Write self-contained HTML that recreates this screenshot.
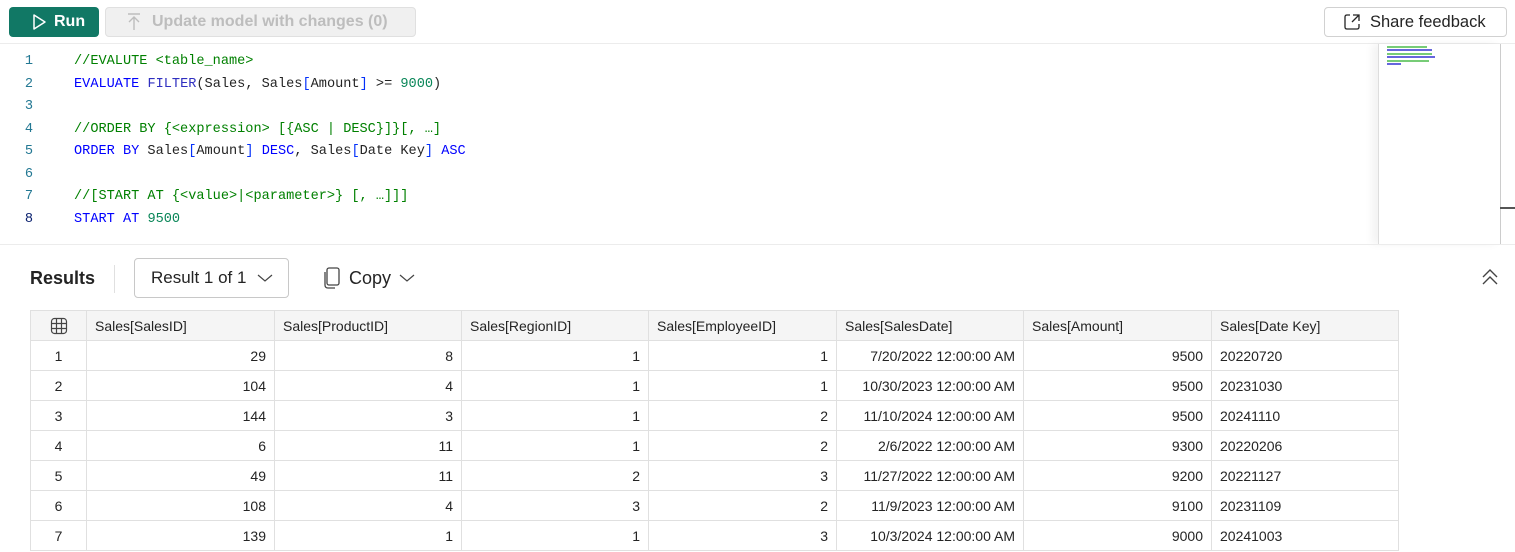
<!DOCTYPE html>
<html><head><style>
body{margin:0;width:1515px;height:552px;overflow:hidden;background:#fff;font-family:"Segoe UI","Liberation Sans",sans-serif;color:#242424;position:relative}
.abs{position:absolute}
.btn{position:absolute;border-radius:4px;font-size:16px;box-sizing:border-box;display:flex;align-items:center}
.code{position:absolute;left:0;top:46px;width:1378px;height:198px;font-family:"Liberation Mono",monospace;font-size:13.6px}
.ln{position:absolute;left:22px;width:14px;color:#237893;text-align:center}
.cl{position:absolute;left:74px;white-space:pre}
.c{color:#008000}.k{color:#0000ff}.n{color:#098658}.f{color:#3030c0}.b{color:#0431fa}
table{position:absolute;left:30px;top:310px;border-collapse:collapse;font-size:14px}
td,th{border:1px solid #e0e0e0;height:30px;padding:0 8px;font-weight:normal;text-align:right;box-sizing:border-box}
th{background:#f5f5f5;text-align:left}
td:first-child{text-align:center;background:#fff}
td:last-child{text-align:left}
</style></head><body>
<div class="btn" style="left:9px;top:7px;width:90px;height:30px;background:#117865;color:#fff;font-weight:600;padding-left:20px">
<svg width="20" height="20" viewBox="0 0 20 20" style="position:absolute;left:20px;top:5px"><path d="M5 3 L16 10 L5 17 Z" fill="none" stroke="#fff" stroke-width="1.5" stroke-linejoin="round"/></svg><span style="margin-left:25px">Run</span></div>
<div class="btn" style="left:105px;top:7px;width:311px;height:30px;background:#f0f0f0;border:1px solid #e0e0e0;color:#bdbdbd;font-weight:600">
<svg width="18" height="20" viewBox="0 0 18 20" style="position:absolute;left:19px;top:4px"><path d="M3 2H15M9 18V5M4 10L9 5L14 10" fill="none" stroke="#bdbdbd" stroke-width="1.4"/></svg><span style="margin-left:46px">Update model with changes (0)</span></div>
<div class="btn" style="left:1324px;top:7px;width:183px;height:30px;border:1px solid #d1d1d1;background:#fff;font-size:16.5px">
<svg width="18" height="18" viewBox="0 0 18 18" style="position:absolute;left:18px;top:5px"><path d="M7 2H4Q2 2 2 4V14Q2 16 4 16H14Q16 16 16 14V11M10 2H16V8M16 2L9 9" fill="none" stroke="#242424" stroke-width="1.3"/></svg><span style="margin-left:45px">Share feedback</span></div>
<div class="abs" style="left:0;top:43px;width:1515px;height:1px;background:#ececec"></div>
<div class="code">
<div class="ln" style="top:8px">1</div><div class="cl c" style="top:8px">//EVALUTE &lt;table_name&gt;</div>
<div class="ln" style="top:31px">2</div><div class="cl" style="top:31px"><span class="k">EVALUATE</span> <span class="f">FILTER</span>(Sales, Sales<span class="b">[</span>Amount<span class="b">]</span> &gt;= <span class="n">9000</span>)</div>
<div class="ln" style="top:53px">3</div>
<div class="ln" style="top:76px">4</div><div class="cl c" style="top:76px">//ORDER BY {&lt;expression&gt; [{ASC | DESC}]}[, …]</div>
<div class="ln" style="top:98px">5</div><div class="cl" style="top:98px"><span class="k">ORDER BY</span> Sales<span class="b">[</span>Amount<span class="b">]</span> <span class="k">DESC</span>, Sales<span class="b">[</span>Date Key<span class="b">]</span> <span class="k">ASC</span></div>
<div class="ln" style="top:121px">6</div>
<div class="ln" style="top:143px">7</div><div class="cl c" style="top:143px">//[START AT {&lt;value&gt;|&lt;parameter&gt;} [, …]]]</div>
<div class="ln" style="top:166px;color:#0b216f">8</div><div class="cl" style="top:166px"><span class="k">START AT</span> <span class="n">9500</span></div>
</div>
<div class="abs" style="left:1378px;top:44px;width:121px;height:200px;border-left:1px solid #ddd;border-right:1px solid #ccc;box-shadow:-6px 0 8px rgba(0,0,0,.05)">
<div class="abs" style="left:8px;top:2px;width:40px;height:2px;background:#7c7"></div>
<div class="abs" style="left:8px;top:5px;width:45px;height:2px;background:#66d"></div>
<div class="abs" style="left:8px;top:9px;width:45px;height:2px;background:#7c7"></div>
<div class="abs" style="left:8px;top:12px;width:48px;height:2px;background:#66d"></div>
<div class="abs" style="left:8px;top:16px;width:42px;height:2px;background:#7c7"></div>
<div class="abs" style="left:8px;top:19px;width:14px;height:2px;background:#66d"></div>
</div>
<div class="abs" style="left:1500px;top:207px;width:15px;height:2px;background:#555"></div>
<div class="abs" style="left:0;top:244px;width:1515px;height:1px;background:#ececec"></div>
<div class="abs" style="left:30px;top:268px;font-size:18px;font-weight:600">Results</div>
<div class="abs" style="left:114px;top:265px;width:1px;height:28px;background:#e0e0e0"></div>
<div class="btn" style="left:134px;top:258px;width:155px;height:40px;border:1px solid #c8c8c8;font-size:17px;padding-left:16px">Result 1 of 1
<svg width="16" height="10" viewBox="0 0 16 10" style="margin-left:11px"><path d="M1 2L8 8L15 2" fill="none" stroke="#444" stroke-width="1.2"/></svg></div>
<svg class="abs" style="left:323px;top:267px" width="18" height="22" viewBox="0 0 18 22"><rect x="4" y="1" width="12" height="17" rx="2" fill="none" stroke="#444" stroke-width="1.3"/><path d="M2 5V18Q2 21 5 21H12" fill="none" stroke="#444" stroke-width="1.3"/></svg>
<div class="abs" style="left:349px;top:268px;font-size:18px">Copy</div>
<svg class="abs" style="left:399px;top:273px" width="16" height="10" viewBox="0 0 16 10"><path d="M1 2L8 8L15 2" fill="none" stroke="#444" stroke-width="1.2"/></svg>
<svg class="abs" style="left:1481px;top:268px" width="18" height="18" viewBox="0 0 18 18"><path d="M2 9L9 2L16 9M2 16L9 9L16 16" fill="none" stroke="#444" stroke-width="1.4"/></svg>
<table>
<tr><th style="width:56px;text-align:center"><svg width="18" height="18" viewBox="0 0 18 18" style="vertical-align:middle"><rect x="1.5" y="1.5" width="15" height="15" rx="3" fill="none" stroke="#444" stroke-width="1.2"/><path d="M6.5 1.5V16.5M11.5 1.5V16.5M1.5 6.5H16.5M1.5 11.5H16.5" stroke="#444" stroke-width="1.2"/></svg></th>
<th style="width:188px">Sales[SalesID]</th><th style="width:187px">Sales[ProductID]</th><th style="width:187px">Sales[RegionID]</th><th style="width:188px">Sales[EmployeeID]</th><th style="width:187px">Sales[SalesDate]</th><th style="width:188px">Sales[Amount]</th><th style="width:187px">Sales[Date Key]</th></tr>
<tr><td>1</td><td>29</td><td>8</td><td>1</td><td>1</td><td>7/20/2022 12:00:00 AM</td><td>9500</td><td>20220720</td></tr>
<tr><td>2</td><td>104</td><td>4</td><td>1</td><td>1</td><td>10/30/2023 12:00:00 AM</td><td>9500</td><td>20231030</td></tr>
<tr><td>3</td><td>144</td><td>3</td><td>1</td><td>2</td><td>11/10/2024 12:00:00 AM</td><td>9500</td><td>20241110</td></tr>
<tr><td>4</td><td>6</td><td>11</td><td>1</td><td>2</td><td>2/6/2022 12:00:00 AM</td><td>9300</td><td>20220206</td></tr>
<tr><td>5</td><td>49</td><td>11</td><td>2</td><td>3</td><td>11/27/2022 12:00:00 AM</td><td>9200</td><td>20221127</td></tr>
<tr><td>6</td><td>108</td><td>4</td><td>3</td><td>2</td><td>11/9/2023 12:00:00 AM</td><td>9100</td><td>20231109</td></tr>
<tr><td>7</td><td>139</td><td>1</td><td>1</td><td>3</td><td>10/3/2024 12:00:00 AM</td><td>9000</td><td>20241003</td></tr>
</table>
</body></html>
